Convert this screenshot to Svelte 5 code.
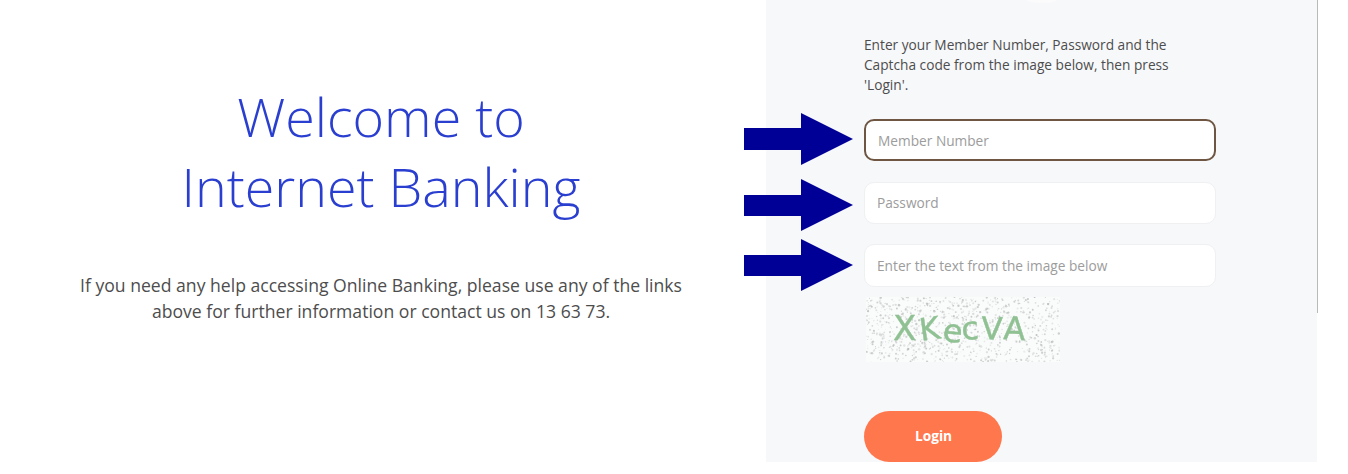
<script>
	// seeded so the captcha noise stays the same between renders
	let seed = 73;
	const rand = () => {
		seed = (seed * 16807) % 2147483647;
		return seed / 2147483647;
	};

	const specks = Array.from({ length: 1000 }, () => ({
		x: rand() * 194,
		y: rand() * 65,
		r: 0.4 + rand() * 0.8,
		o: 0.15 + rand() * 0.45
	}));

	const letters = [
		{ c: 'X', x: 27, y: 43, rot: 0, size: 34 },
		{ c: 'K', x: 55, y: 44, rot: -8, size: 31 },
		{ c: 'e', x: 76, y: 44, rot: 6, size: 32 },
		{ c: 'c', x: 96, y: 43, rot: -4, size: 32 },
		{ c: 'V', x: 115, y: 42, rot: 2, size: 31 },
		{ c: 'A', x: 137, y: 42, rot: 3, size: 32 }
	];

	const arrows = [
		{ top: 113, h: 52, shaftTop: 15, shaftH: 22 },
		{ top: 179, h: 52, shaftTop: 16, shaftH: 21 },
		{ top: 239, h: 52, shaftTop: 16, shaftH: 21 }
	];
</script>

<div class="page">
	<section class="welcome">
		<h1>Welcome to<br />Internet Banking</h1>
		<p>If you need any help accessing Online Banking, please use any of the links above for further information or contact us on 13 63 73.</p>
	</section>

	<section class="panel">
		<span class="glow"></span>
		<form class="login" on:submit|preventDefault>
			<p class="intro">Enter your Member Number, Password and the Captcha code from the image below, then press 'Login'.</p>
			<input class="field active" type="text" placeholder="Member Number" />
			<input class="field" type="password" placeholder="Password" />
			<input class="field last" type="text" placeholder="Enter the text from the image below" />
			<svg class="captcha" width="194" height="65" viewBox="0 0 194 65" role="img" aria-label="Captcha image">
				<rect width="194" height="65" fill="#fafbfb" />
				{#each specks as s}
					<circle cx={s.x} cy={s.y} r={s.r} fill="#a9abab" opacity={s.o} />
				{/each}
				{#each letters as l}
					<text x={l.x} y={l.y} font-size={l.size} transform="rotate({l.rot} {l.x} {l.y})" class="captcha-char">{l.c}</text>
				{/each}
			</svg>
			<button class="submit" type="submit">Login</button>
		</form>
	</section>
	<div class="edge"></div>

	{#each arrows as a}
		<svg class="arrow" style="top: {a.top}px" width="110" height={a.h} viewBox="0 0 110 {a.h}" aria-hidden="true">
			<polygon
				fill="#000096"
				points="0,{a.shaftTop} 57,{a.shaftTop} 57,0 109,{a.h / 2} 57,{a.h} 57,{a.shaftTop + a.shaftH} 0,{a.shaftTop + a.shaftH}"
			/>
		</svg>
	{/each}
</div>

<style>
	:global(body) {
		margin: 0;
		background: #fff;
	}

	.page {
		position: relative;
		display: flex;
		height: 462px;
		overflow: hidden;
		font-family: 'Open Sans', sans-serif;
	}

	.welcome {
		box-sizing: border-box;
		width: 766px;
		padding: 81px 4px 0 0;
		display: flex;
		flex-direction: column;
		align-items: center;
		text-align: center;
	}

	h1 {
		margin: 0;
		font-size: 53.8px;
		font-weight: 300;
		line-height: 70px;
		color: #2a3fd0;
	}

	.welcome p {
		width: 620px;
		margin: 52px 0 0;
		font-size: 17.6px;
		line-height: 25.6px;
		color: #4d4d4d;
	}

	.panel {
		position: relative;
		box-sizing: border-box;
		width: 551px;
		padding: 35px 0 0 98px;
		background: #f7f8fa;
	}

	.glow {
		position: absolute;
		top: -5px;
		left: 260px;
		width: 32px;
		height: 8px;
		border-radius: 50%;
		background: #fbfbfc;
	}

	.edge {
		width: 1px;
		height: 313px;
		background: #b9b9b9;
	}

	.login {
		display: flex;
		flex-direction: column;
		align-items: flex-start;
		width: 352px;
	}

	.intro {
		margin: 0 0 24px;
		width: 320px;
		font-size: 13.7px;
		line-height: 20px;
		color: #4d4d4d;
	}

	.field {
		box-sizing: border-box;
		width: 352px;
		height: 42px;
		margin-bottom: 20px;
		padding: 0 12px 1px;
		border: 1px solid #eff0f2;
		border-radius: 10px;
		background: #fff;
		font-family: inherit;
		font-size: 13.7px;
		outline: none;
	}

	.field::placeholder {
		color: #9c9c9c;
		opacity: 1;
	}

	.field.active {
		border: 2px solid #6f5643;
		margin-bottom: 21px;
		padding-bottom: 0;
	}

	.field.last {
		height: 43px;
		margin-bottom: 10px;
	}

	.captcha {
		display: block;
		margin-left: 2px;
		filter: blur(0.3px);
	}

	.captcha-char {
		font-family: 'DejaVu Sans', sans-serif;
		fill: #8fc193;
		stroke: #8fc193;
		stroke-width: 0.4px;
	}

	.submit {
		width: 138px;
		height: 51px;
		margin-top: 49px;
		padding: 0 0 2px 1px;
		border: none;
		border-radius: 26px;
		background: #ff774d;
		color: #fff;
		font-family: inherit;
		font-size: 13.7px;
		font-weight: 700;
	}

	.arrow {
		position: absolute;
		left: 744px;
	}
</style>
